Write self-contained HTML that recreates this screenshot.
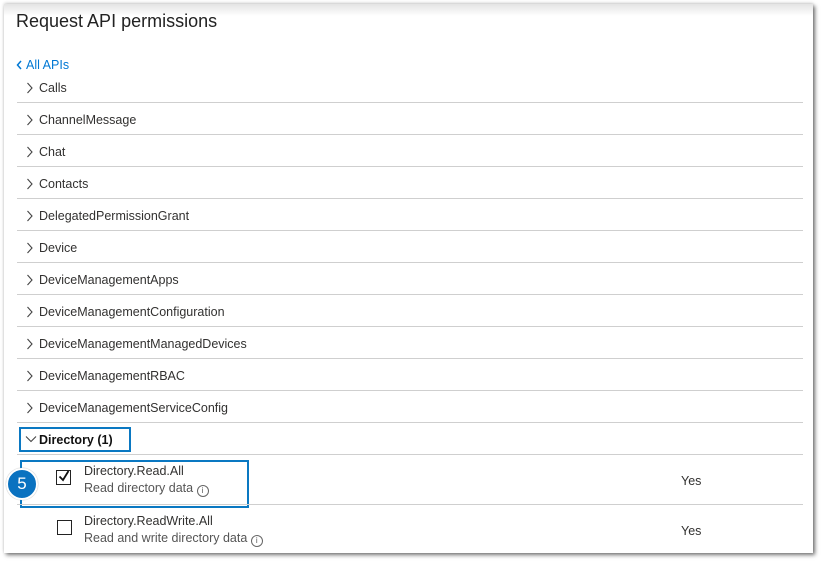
<!DOCTYPE html>
<html><head><style>
body{margin:0;width:822px;height:563px;background:#fff;position:relative;overflow:hidden;font-family:"Liberation Sans",sans-serif;color:#323130}
.panel{position:absolute;left:4px;top:4px;width:809px;height:549px;background:#fff;box-shadow:2px 2px 4px rgba(0,0,0,.55),0 -1px 3px rgba(0,0,0,.15)}
.topg{position:absolute;left:4px;top:4px;width:809px;height:12px;background:linear-gradient(#e4e4e4,#fff)}
.t{position:absolute;white-space:nowrap}
.row{position:absolute;left:27px;font-size:12.5px}
.row svg{position:absolute;left:-1px;top:1px}
.row span{position:absolute;left:12px;top:0}
.line{position:absolute;left:17px;width:786px;height:1px;background:#cfcfcf}
</style></head><body>
<div class="panel"></div><div class="topg"></div>
<div class="t" style="left:16px;top:11px;font-size:18px;color:#222">Request API permissions</div>
<div class="t" style="left:16px;top:58px;font-size:12.5px;color:#0078d4"><svg width="10" height="10" style="vertical-align:-1px"><path d="M5 1L1.5 5L5 9" stroke="#0078d4" stroke-width="1.5" fill="none"/></svg>All APIs</div>
<div id="rows"></div>
<script>
var names=["Calls","ChannelMessage","Chat","Contacts","DelegatedPermissionGrant","Device","DeviceManagementApps","DeviceManagementConfiguration","DeviceManagementManagedDevices","DeviceManagementRBAC","DeviceManagementServiceConfig"];
var h="";
for(var i=0;i<names.length;i++){var y=81+32*i;
h+='<div class="row" style="top:'+y+'px"><svg width="8" height="12"><path d="M1.5 1L6 6L1.5 11" stroke="#444" stroke-width="1.1" fill="none"/></svg><span>'+names[i]+'</span></div>';
h+='<div class="line" style="top:'+(y+21)+'px"></div>';}
document.getElementById("rows").innerHTML=h;
</script>
<div style="position:absolute;left:19px;top:427px;width:108px;height:21px;border:2px solid #0a78c2"></div>
<div class="t" style="left:25px;top:433px;font-size:12.5px;font-weight:bold;color:#111"><svg width="14" height="8" style="vertical-align:1px"><path d="M1 1.5L6 6.5L11 1.5" stroke="#444" stroke-width="1.1" fill="none"/></svg>Directory (1)</div>
<div class="line" style="top:454px"></div>
<div style="position:absolute;left:20px;top:460px;width:225px;height:44px;border:2px solid #0a78c2"></div>
<div style="position:absolute;left:56px;top:470px;width:13px;height:13px;border:1.5px solid #222;background:#fff"></div>
<svg style="position:absolute;left:57px;top:469px" width="14" height="14"><path d="M2.5 7.5L6 11L11.5 2" stroke="#111" stroke-width="1.8" fill="none"/></svg>
<div class="t" style="left:84px;top:464px;font-size:12.5px">Directory.Read.All</div>
<div class="t" style="left:84px;top:481px;font-size:12.5px;color:#555">Read directory data <span style="display:inline-block;width:10px;height:10px;border:1px solid #666;border-radius:50%;font-size:8px;line-height:10px;text-align:center;vertical-align:-1px">i</span></div>
<div class="t" style="left:681px;top:474px;font-size:12.5px">Yes</div>
<div class="line" style="top:504px"></div>
<div style="position:absolute;left:57px;top:520px;width:13px;height:13px;border:1.5px solid #222"></div>
<div class="t" style="left:84px;top:514px;font-size:12.5px">Directory.ReadWrite.All</div>
<div class="t" style="left:84px;top:531px;font-size:12.5px;color:#555">Read and write directory data <span style="display:inline-block;width:10px;height:10px;border:1px solid #666;border-radius:50%;font-size:8px;line-height:10px;text-align:center;vertical-align:-1px">i</span></div>
<div class="t" style="left:681px;top:524px;font-size:12.5px">Yes</div>
<div style="position:absolute;left:6px;top:468px;width:28px;height:28px;border-radius:50%;background:#0a72c0;border:2px solid #fff;box-shadow:0 0 1px #888;color:#fff;font-size:17px;text-align:center;line-height:28px">5</div>
</body></html>
